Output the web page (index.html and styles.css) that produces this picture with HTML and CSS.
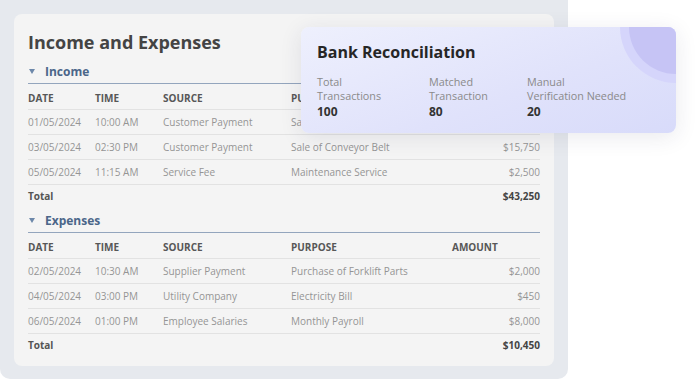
FILE: index.html
```html
<!DOCTYPE html>
<html lang="en">
<head>
    <meta charset="UTF-8">
    <title>Income and Expenses</title>
    <link rel="stylesheet" href="styles.css">
</head>
<body>
<div class="frame">
    <div class="sheet">
        <h1 class="title">Income and Expenses</h1>

        <div class="section-head"><span class="caret"></span>Income</div>
        <table class="ledger">
            <tr>
                <th class="c-date">Date</th>
                <th class="c-time">Time</th>
                <th class="c-source">Source</th>
                <th class="c-purpose">Purpose</th>
                <th class="c-amount">Amount</th>
            </tr>
            <tr>
                <td>01/05/2024</td><td>10:00 AM</td><td>Customer Payment</td><td>Sale of Forklifts</td><td class="num">$25,000</td>
            </tr>
            <tr>
                <td>03/05/2024</td><td>02:30 PM</td><td>Customer Payment</td><td>Sale of Conveyor Belt</td><td class="num">$15,750</td>
            </tr>
            <tr>
                <td>05/05/2024</td><td>11:15 AM</td><td>Service Fee</td><td>Maintenance Service</td><td class="num">$2,500</td>
            </tr>
            <tr class="total">
                <td>Total</td><td></td><td></td><td></td><td class="num">$43,250</td>
            </tr>
        </table>

        <div class="section-head"><span class="caret"></span>Expenses</div>
        <table class="ledger">
            <tr>
                <th class="c-date">Date</th>
                <th class="c-time">Time</th>
                <th class="c-source">Source</th>
                <th class="c-purpose">Purpose</th>
                <th class="c-amount">Amount</th>
            </tr>
            <tr>
                <td>02/05/2024</td><td>10:30 AM</td><td>Supplier Payment</td><td>Purchase of Forklift Parts</td><td class="num">$2,000</td>
            </tr>
            <tr>
                <td>04/05/2024</td><td>03:00 PM</td><td>Utility Company</td><td>Electricity Bill</td><td class="num">$450</td>
            </tr>
            <tr>
                <td>06/05/2024</td><td>01:00 PM</td><td>Employee Salaries</td><td>Monthly Payroll</td><td class="num">$8,000</td>
            </tr>
            <tr class="total">
                <td>Total</td><td></td><td></td><td></td><td class="num">$10,450</td>
            </tr>
        </table>
    </div>
</div>

<div class="recon">
    <span class="ring ring-outer"></span>
    <span class="ring ring-inner"></span>
    <h2 class="recon-title">Bank Reconciliation</h2>
    <div class="stats">
        <div class="stat stat-total">
            <div class="stat-label">Total<br>Transactions</div>
            <div class="stat-value">100</div>
        </div>
        <div class="stat stat-matched">
            <div class="stat-label">Matched<br>Transaction</div>
            <div class="stat-value">80</div>
        </div>
        <div class="stat">
            <div class="stat-label">Manual<br>Verification Needed</div>
            <div class="stat-value">20</div>
        </div>
    </div>
</div>
</body>
</html>
```

FILE: styles.css
```css
* {
    box-sizing: border-box;
}

body {
    margin: 0;

    font-family: "Open Sans", Lato, sans-serif;
    background-color: #ffffff;
}

.frame {
    width: 568px;
    height: 379px;
    padding: 14px;

    border-radius: 0 0 10px 10px;
    background-color: #e6e9ee;
}

.sheet {
    height: 352px;
    padding: 16px 14px 0;

    border-radius: 8px;
    background-color: #f4f4f4;
}

.title {
    font-size: 18px;
    font-weight: bold;
    line-height: 24px;

    margin: 0 0 5px;

    color: #444444;
}

.section-head {
    font-size: 12px;
    font-weight: bold;
    line-height: 23px;

    display: flex;
    align-items: center;

    height: 25px;
    padding-top: 1px;

    color: #4b6689;
    border-bottom: 1px solid #93a5bd;
}

.caret {
    width: 0;
    height: 0;
    margin: 0 10px 0 1px;

    border-top: 5px solid #6d88aa;
    border-right: 3.5px solid transparent;
    border-left: 3.5px solid transparent;
}

.ledger {
    width: 512px;

    border-collapse: collapse;

    table-layout: fixed;
}

.ledger th,
.ledger td {
    font-size: 10px;

    height: 25px;
    padding: 0;

    text-align: left;
    white-space: nowrap;

    border-bottom: 1px solid #e2e2e2;
}

.ledger th {
    font-weight: bold;

    padding-top: 3px;

    text-transform: uppercase;

    color: #575757;
}

.ledger td {
    color: #959595;
}

.c-date { width: 67px; }
.c-time { width: 68px; }
.c-source { width: 128px; }
.c-purpose { width: 161px; }
.c-amount { width: 88px; }

.ledger td.num {
    text-align: right;
}

.ledger .total td {
    font-weight: bold;

    height: 24px;

    color: #555555;
    border-bottom: none;
}

.ledger .total td.num {
    color: #444444;
}

.recon {
    position: absolute;
    top: 27px;
    left: 301px;

    overflow: hidden;

    width: 375px;
    height: 106px;
    padding: 14px 16px 0;

    border-radius: 8px;
    background: linear-gradient(160deg, #eef0fd 0%, #e0e2fb 60%, #d8dbfa 100%);
    box-shadow: 0 4px 22px rgba(40, 40, 80, .1);
}

.ring {
    position: absolute;

    border-radius: 50%;
}

.ring-outer {
    top: -56px;
    right: -56px;

    width: 112px;
    height: 112px;

    background-color: #d5d5fb;
}

.ring-inner {
    top: -47px;
    right: -47px;

    width: 94px;
    height: 94px;

    background-color: #c6c4f5;
}

.recon-title {
    font-size: 16px;
    font-weight: bold;
    line-height: 22px;

    position: relative;

    margin: 0 0 12px;

    color: #262626;
}

.stats {
    display: flex;
}

.stat-total {
    width: 112px;
}

.stat-matched {
    width: 98px;
}

.stat-label {
    font-size: 10.8px;
    line-height: 14px;

    color: #8a8a8a;
}

.stat-value {
    font-size: 12px;
    font-weight: bold;
    line-height: 16px;

    margin-top: 1px;

    color: #333333;
}
```
